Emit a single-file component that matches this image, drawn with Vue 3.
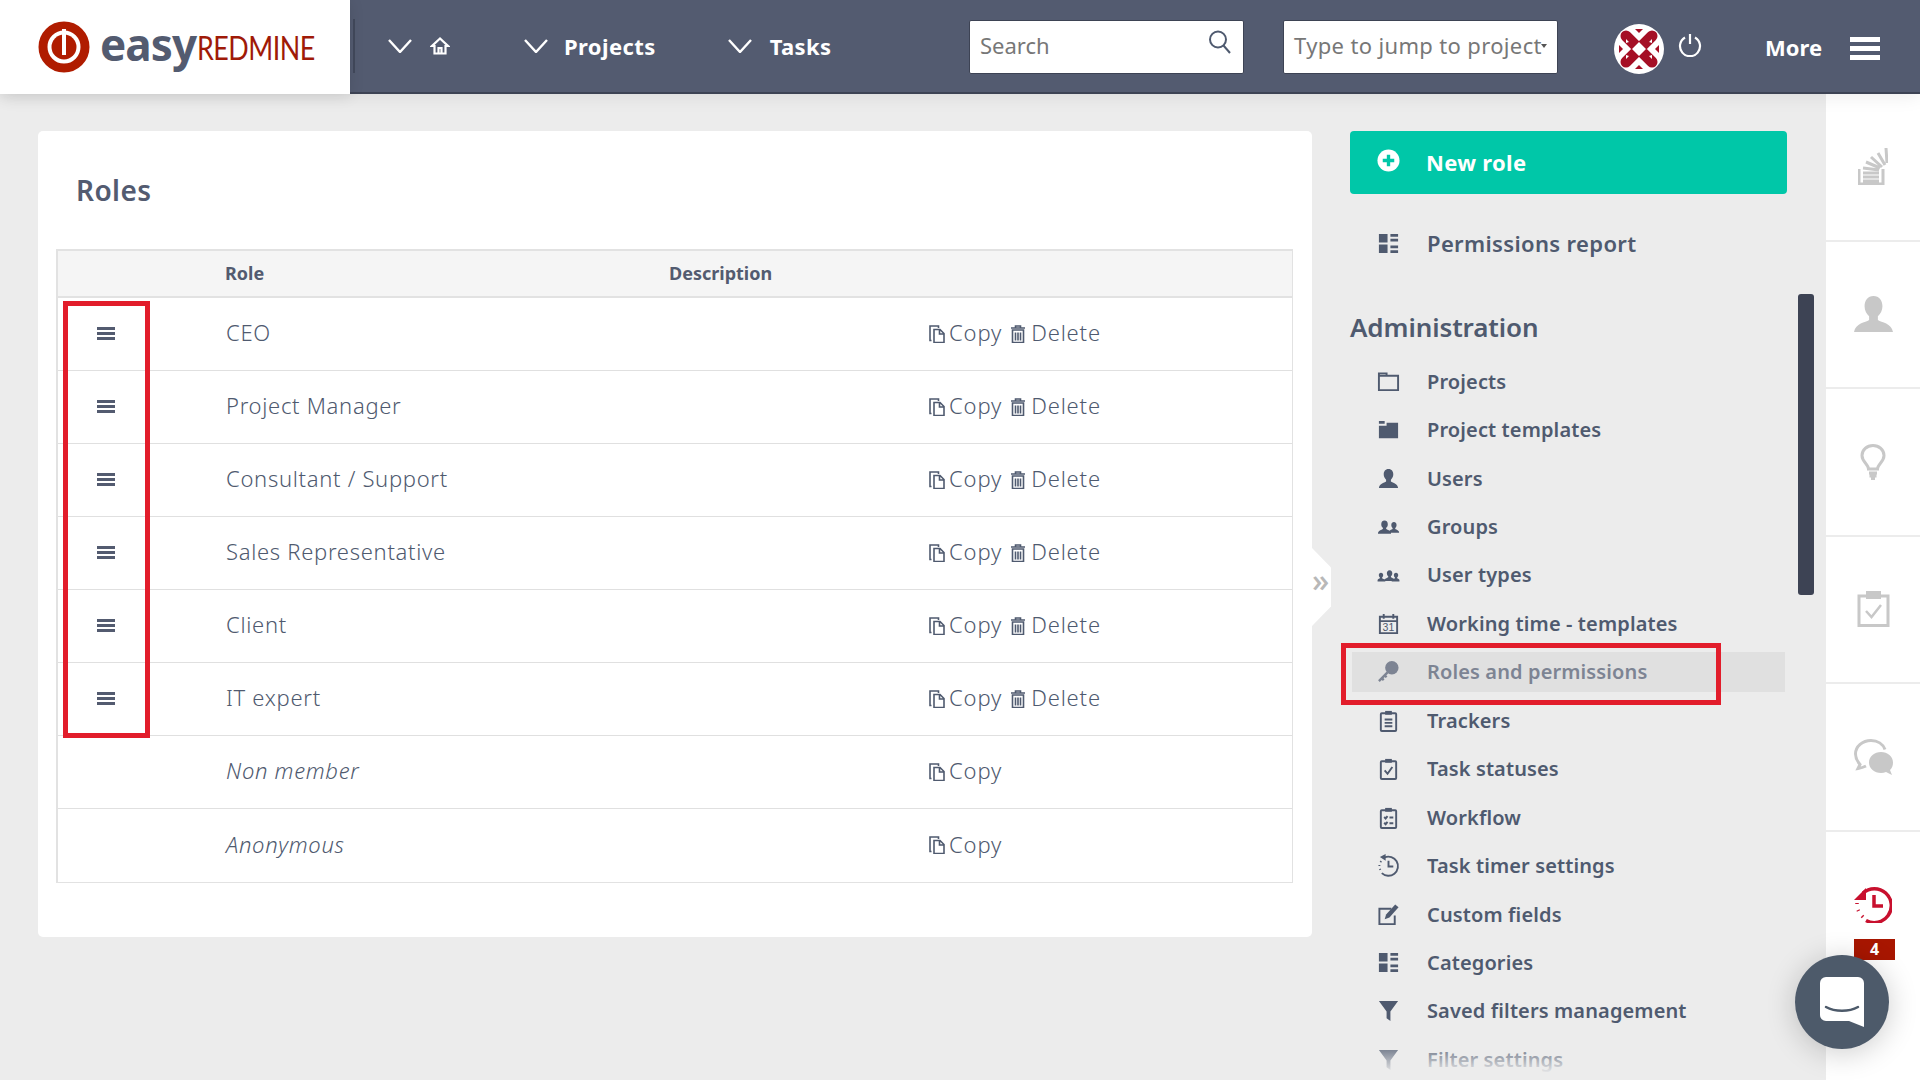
<script setup>
const person = (x, y, s) => {
  const n = (v) => +v.toFixed(2)
  const p = (a, b) => `${n(x + a * s)} ${n(y + b * s)}`
  return `M${p(12, 2)}C${p(8.6, 2)} ${p(7, 4.6)} ${p(7, 7.6)}C${p(7, 10)} ${p(8, 12)} ${p(9.5, 13.2)}V${n(y + 15 * s)}C${p(7.5, 16.6)} ${p(2, 17.2)} ${p(2, 22)}H${n(x + 22 * s)}C${p(22, 17.2)} ${p(16.5, 16.6)} ${p(14.5, 15)}V${n(y + 13.2 * s)}C${p(16, 12)} ${p(17, 10)} ${p(17, 7.6)}C${p(17, 4.6)} ${p(15.4, 2)} ${p(12, 2)}Z`
}

const gridList = 'M2 2h9v9H2zM2 13h9v9H2zM14 2h8v3h-8zM14 7h8v3h-8zM14 14h8v3h-8zM14 19h8v3h-8z'
const clipOutline = 'M5 4.5h14a1 1 0 0 1 1 1V22a1 1 0 0 1-1 1H5a1 1 0 0 1-1-1V5.500a1 1 0 0 1 1-1z'
const clipTop = 'M8.500 2h7v4h-7z'

const menu = [
  { label: 'Projects', stroke: 'M2 6h20v15H2zM2 6V3.500h8V6' },
  { label: 'Project templates', fill: 'M2 3h6v3h-6zM10 5h12v16H2V8h8z' },
  { label: 'Users', fill: person(0, 0, 1) },
  { label: 'Groups', fill: person(-1, 4, 0.72) + person(11, 6, 0.58), small: true },
  { label: 'User types', fill: person(-2, 9, 0.48) + person(6, 6, 0.6) + person(14.500, 9, 0.48), small: true },
  { label: 'Working time - templates', stroke: 'M3 5h18v17H3zM3 9.500h18', fill: 'M6 2h2v5H6zM16 2h2v5h-2z', text: '31' },
  { label: 'Roles and permissions', active: true, fill: 'M15.500 1a7 7 0 1 1 0 14 7 7 0 0 1 0-14z', shaft: 'M11 13l-9 9M5 19l2 2M8 16l2 2' },
  { label: 'Trackers', stroke: clipOutline + 'M8 11h8M8 14.500h8M8 18h8', fill: clipTop },
  { label: 'Task statuses', stroke: clipOutline + 'M8 14l3 3.500 5-7', fill: clipTop },
  { label: 'Workflow', stroke: clipOutline + 'M7.500 11.500l1.500 1.500 2-2.500M7.500 17.500l1.500 1.500 2-2.500M13 12h4M13 18h4', fill: clipTop },
  { label: 'Task timer settings', stroke: 'M8 3.500A10 10 0 1 1 5 20M12 7v6h5', dots: true },
  { label: 'Custom fields', stroke: 'M15 6H2.500v16h16v-9', fill: 'M19 1.500l3.500 3L13 15l-5 2 1.500-5z' },
  { label: 'Categories', fill: gridList },
  { label: 'Saved filters management', fill: 'M2 2h20l-8 11v10l-4-3v-7z' },
  { label: 'Filter settings', fill: 'M2 2h20l-8 11v10l-4-3v-7z' },
]

const roles = [
  { name: 'CEO', drag: true, del: true },
  { name: 'Project Manager', drag: true, del: true },
  { name: 'Consultant / Support', drag: true, del: true },
  { name: 'Sales Representative', drag: true, del: true },
  { name: 'Client', drag: true, del: true },
  { name: 'IT expert', drag: true, del: true },
  { name: 'Non member', builtin: true },
  { name: 'Anonymous', builtin: true },
]
</script>

<template>
  <div class="page">
    <header class="topbar">
      <div class="brand">
        <svg class="brand-mark" viewBox="0 0 52 52">
          <circle cx="26" cy="26" r="21" fill="none" stroke="#b01c00" stroke-width="9" />
          <circle cx="26" cy="26" r="12.500" fill="#b01c00" />
          <rect x="24" y="8" width="4" height="26" fill="#fff" />
        </svg>
        <span class="brand-easy">easy</span>
        <span class="brand-red">REDMINE</span>
      </div>
      <div class="nav-sep"></div>
      <nav class="nav">
        <a class="nav-item nav-home">
          <svg class="chev" viewBox="0 0 24 14"><path d="M1 1l11 12L23 1" /></svg>
          <svg class="home" viewBox="0 0 20 18"><path d="M10 1.500L2 9h2.500v7.500h11V9H18zM8.500 16.500V11h3v5.500" /></svg>
        </a>
        <a class="nav-item nav-projects">
          <svg class="chev" viewBox="0 0 24 14"><path d="M1 1l11 12L23 1" /></svg>
          <span>Projects</span>
        </a>
        <a class="nav-item">
          <svg class="chev" viewBox="0 0 24 14"><path d="M1 1l11 12L23 1" /></svg>
          <span>Tasks</span>
        </a>
      </nav>
      <div class="field field-search">
        <span>Search</span>
        <svg class="search-icon" viewBox="0 0 24 24"><circle cx="10" cy="9.500" r="8" /><path d="M15.500 15.500L22 23" /></svg>
      </div>
      <div class="field field-jump">
        <span class="jump-text">Type to jump to project</span>
        <i class="jump-caret"></i>
      </div>
      <svg class="avatar" viewBox="0 0 50 50">
        <circle cx="25" cy="25" r="25" fill="#fff" />
        <path d="M12 12l26 26M38 12L12 38" stroke="#a50f25" stroke-width="11" stroke-linecap="round" fill="none" />
        <path d="M25 18l7 7-7 7-7-7zM12 15l3 3-3 1zM38 15l-3 3 3 1zM12 35l3-3-3-1zM38 35l-3-3 3-1z" fill="#fff" />
        <path d="M25 9l-4-4h8zM25 41l-4 4h8zM9 25l-4-4v8zM41 25l4-4v8z" fill="#a50f25" />
      </svg>
      <svg class="power" viewBox="0 0 24 24"><path d="M7 4.500a10 10 0 1 0 10 0M12 1v10" /></svg>
      <a class="more">More</a>
      <div class="burger"><i></i><i></i><i></i></div>
    </header>

    <div class="main">
      <section class="content">
        <div class="card">
          <h1>Roles</h1>
          <table class="roles">
            <colgroup>
              <col class="c-drag" /><col class="c-role" /><col class="c-desc" /><col />
            </colgroup>
            <thead>
              <tr><th></th><th>Role</th><th>Description</th><th></th></tr>
            </thead>
            <tbody>
              <tr v-for="r in roles" :key="r.name">
                <td class="drag">
                  <div v-if="r.drag" class="handle"><i></i><i></i><i></i></div>
                </td>
                <td :class="{ builtin: r.builtin }">{{ r.name }}</td>
                <td></td>
                <td>
                  <div class="actions">
                    <svg class="act-icon" viewBox="0 0 16 18"><path d="M5 4.500h6l4 4v9H5zM10.500 4.500v4.500H15M2.500 15.500H1V1h8.500v2" /></svg>
                    <span>Copy</span>
                    <template v-if="r.del">
                      <svg class="act-icon trash" viewBox="0 0 16 18"><path d="M2.500 5h11v12.500h-11zM1 3h14M5.500 3V1h5v2M5.500 7.500v8M8 7.500v8M10.500 7.500v8" /></svg>
                      <span>Delete</span>
                    </template>
                  </div>
                </td>
              </tr>
            </tbody>
          </table>
        </div>
        <div class="collapse-tab"><span>»</span></div>
      </section>

      <aside class="side">
        <a class="btn-new">
          <svg class="btn-plus" viewBox="0 0 24 24">
            <circle cx="12" cy="12" r="11.500" fill="#fff" />
            <path d="M12 6v12M6 12h12" stroke="#00c7a8" stroke-width="3.500" />
          </svg>
          <span>New role</span>
        </a>
        <a class="report">
          <svg class="side-icon" viewBox="0 0 24 24"><path :d="gridList" /></svg>
          <span>Permissions report</span>
        </a>
        <h2>Administration</h2>
        <ul class="menu">
          <li v-for="m in menu" :key="m.label" :class="{ active: m.active }">
            <svg class="side-icon" :class="{ small: m.small }" viewBox="0 0 24 24">
              <path v-if="m.fill" :d="m.fill" />
              <path v-if="m.stroke" class="st" :d="m.stroke" />
              <path v-if="m.shaft" class="shaft" :d="m.shaft" />
              <path v-if="m.dots" class="dots" d="M4.500 7.500l-1 1M2.500 11.500v1M3 15.500l.5 1" />
              <path v-if="m.dots" d="M9 0v7L3 3z" />
              <text v-if="m.text" x="12" y="20" text-anchor="middle">{{ m.text }}</text>
            </svg>
            <span>{{ m.label }}</span>
          </li>
        </ul>
        <div class="side-fade"></div>
        <div class="scroll-thumb"></div>
      </aside>

      <div class="rail">
        <div class="rail-cell">
          <svg class="r-stack" viewBox="0 0 30 37">
            <path class="rs" d="M1 21v15h24V21M5 25h16M5 29h16M5 33h16" />
            <path class="rs" d="M5 20l16 2M8 14l14 6M13 9l11 10M20 5l7 12M28 0l1 15" />
          </svg>
        </div>
        <div class="rail-cell">
          <svg class="r-user" viewBox="0 0 24 21" preserveAspectRatio="none"><path d="M12 0c-3.500 0-5.500 2.700-5.500 6 0 2.500 1.200 4.600 2.800 5.800v2.200C7 15.500 1 15.800 0 21h24c-1-5.200-7-5.500-9.300-7v-2.200c1.600-1.200 2.800-3.300 2.800-5.800 0-3.300-2-6-5.500-6z" /></svg>
        </div>
        <div class="rail-cell">
          <svg class="r-bulb" viewBox="0 0 26 36"><path class="rs" d="M8.500 25c0-5-6.500-7-6.500-13.500a11 10 0 0 1 22 0C24 18 17.500 20 17.500 25zM9 29h8M9.500 32h7M11 35h4" /></svg>
        </div>
        <div class="rail-cell">
          <svg class="r-clip" viewBox="0 0 33 36">
            <path class="rs" d="M9 5H2v29.500h29V5h-7" />
            <path d="M9 0h15v8H9z" fill="#c8c8c8" />
            <path class="rs thin" d="M9 20l5.500 6L24 14" />
          </svg>
        </div>
        <div class="rail-cell">
          <svg class="r-chat" viewBox="0 0 39 36">
            <path class="rs" d="M12 27c-2 1-5 2-8 2.500l2-4C3 22 1.500 18.500 1.500 15 1.500 7.500 8.500 1.500 17 1.500c6.500 0 12 3.500 14 9" />
            <path d="M27 13c6.500 0 12 4.500 12 10.500 0 3-1 5.500-3 7.500l2 5-6-3c-1.500.7-3.200 1-5 1-6.500 0-12-4.500-12-10.500S20.500 13 27 13z" fill="#c8c8c8" />
          </svg>
        </div>
        <div class="rail-cell rail-timer">
          <svg class="r-timer" viewBox="0 0 38 37">
            <path class="rt" d="M9 7a17 17 0 1 1 3 27.500M20 9v11h9" />
            <path d="M12 2v12H0z" fill="#c8102e" />
            <path class="rt dash" d="M3 17v1M4 24l.5 1M8 30l1 1" />
          </svg>
          <div class="badge">4</div>
        </div>
      </div>
    </div>

    <div class="mark mark-handles"></div>
    <div class="mark mark-roles"></div>
    <div class="chat-bubble">
      <svg viewBox="0 0 44 50">
        <path d="M6 0h32a6 6 0 0 1 6 6v44l-15-6H6a6 6 0 0 1-6-6V6a6 6 0 0 1 6-6z" fill="#fff" />
        <path d="M6 30c9 5 23 5 32 0" fill="none" stroke="#4d5a6a" stroke-width="2.500" stroke-linecap="round" />
      </svg>
    </div>
  </div>
</template>

<style>
html, body { margin: 0; background: #ececec; }
</style>

<style scoped>
.page {
  position: relative;
  width: 1920px;
  height: 1080px;
  overflow: hidden;
  display: flex;
  flex-direction: column;
  background: #ececec;
  font-family: "Noto Sans", "Open Sans", sans-serif;
  color: #4f5a6f;
}

.topbar {
  flex: none;
  height: 92px;
  display: flex;
  align-items: center;
  background: #535b70;
  border-bottom: 2px solid #3d4354;
  box-shadow: 0 2px 18px rgba(0, 0, 0, .08);
  position: relative;
  z-index: 2;
}
.brand {
  flex: none;
  width: 350px;
  height: 94px;
  box-sizing: border-box;
  padding: 0 0 0 38px;
  margin-bottom: -2px;
  display: flex;
  align-items: center;
  background: #fff;
  box-shadow: 0 2px 14px rgba(0, 0, 0, .1);
}
.brand-mark { width: 52px; height: 52px; flex: none; }
.brand-easy { margin-left: 10px; font-size: 44px; font-weight: 700; line-height: 52px; letter-spacing: -.9px; color: #535b70; padding-bottom: 6px; }
.brand-red { margin-left: 1px; font-family: Lato, sans-serif; font-weight: 400; font-size: 32px; color: #a01a08; transform: scaleX(.84); transform-origin: left; letter-spacing: -.6px; }
.nav-sep { width: 2px; height: 54px; margin-left: 3px; background: #3f4658; }
.nav { display: flex; align-items: center; margin-left: 33px; color: #fff; font-size: 22px; font-weight: 700; letter-spacing: .4px; }
.nav-item { display: flex; align-items: center; margin-right: 71px; line-height: 30px; }
.nav-home { margin-right: 74px; }
.nav-projects .chev { margin-right: 16px; }
.nav-projects { margin-right: 72px; }
.chev { width: 24px; height: 14px; margin-right: 18px; fill: none; stroke: #fff; stroke-width: 2.4; }
.home { width: 20px; height: 18px; fill: none; stroke: #fff; stroke-width: 2.2; }
.field {
  flex: none;
  box-sizing: border-box;
  width: 275px;
  height: 54px;
  display: flex;
  align-items: center;
  padding: 0 0 4px 10px;
  background: #fff;
  border: 1px solid #3d4354;
  border-radius: 2px;
  font-size: 22px;
  color: #777;
  position: relative;
}
.field-search { position: absolute; left: 969px; top: 20px; }
.field-jump { position: absolute; left: 1283px; top: 20px; letter-spacing: .35px; }
.search-icon { position: absolute; right: 11px; top: 9px; width: 24px; height: 24px; fill: none; stroke: #4f5a6f; stroke-width: 2; }
.jump-text { white-space: nowrap; }
.jump-caret { position: absolute; right: 10px; top: 23px; border: 3px solid transparent; border-top: 4px solid #555; }
.avatar { position: absolute; left: 1614px; top: 24px; width: 50px; height: 50px; }
.power { position: absolute; left: 1678px; top: 33px; width: 24px; height: 24px; fill: none; stroke: #fff; stroke-width: 2.2; }
.more { position: absolute; left: 1765px; top: 30px; color: #fff; font-size: 22px; font-weight: 700; line-height: 34px; }
.burger { position: absolute; left: 1850px; top: 37px; width: 30px; display: flex; flex-direction: column; gap: 4px; }
.burger i { display: block; height: 5px; background: #fff; }

.main { flex: 1; min-height: 0; display: flex; }
.content { flex: none; width: 1312px; box-sizing: border-box; padding: 37px 0 0 38px; position: relative; }
.card {
  width: 1274px;
  height: 806px;
  box-sizing: border-box;
  padding: 0 18px;
  background: #fff;
  border-radius: 5px;
}
h1 { margin: 0; padding: 39px 0 39px 20px; height: 40px; font-size: 28px; line-height: 40px; font-weight: 600; letter-spacing: .4px; color: #535b70; }
.roles {
  width: 1237px;
  table-layout: fixed;
  border-collapse: separate;
  border-spacing: 0;
  border: 2px solid #e2e2e2;
  border-bottom-width: 1px;
  border-right-width: 1px;
}
.c-drag { width: 96px; }
.c-role { width: 507px; }
.c-desc { width: 268px; }
th {
  height: 43px;
  padding: 0 0 2px;
  background: #f5f5f5;
  border-bottom: 2px solid #e2e2e2;
  font-size: 18px;
  font-weight: 700;
  text-align: left;
  color: #535b70;
}
th:nth-child(2) { padding-left: 71px; }
td:nth-child(2) { padding-left: 72px; }
th:nth-child(3) { padding-left: 8px; }
td {
  height: 73px;
  padding: 0 0 4px;
  box-sizing: border-box;
  border-bottom: 1px solid #e0e0e0;
  font-size: 22px;
  font-weight: 300;
  letter-spacing: .7px;
  color: #4f5a6f;
  white-space: nowrap;
}
tbody tr:last-child td { border-bottom: 0; }
.builtin { font-style: italic; }
td.drag { padding-bottom: 0; }
.handle { width: 18px; margin: 0 auto; display: flex; flex-direction: column; gap: 2px; margin-top: -2px; }
.handle i { display: block; height: 3px; background: #535b70; }
.actions { display: flex; align-items: center; letter-spacing: .85px; }
.act-icon { width: 16px; height: 18px; margin-right: 4px; fill: none; stroke: #4f5a6f; stroke-width: 1.6; margin-top: 3px; }
.trash { margin-left: 8px; margin-right: 5px; }

.collapse-tab {
  position: absolute;
  left: 1312px;
  top: 454px;
  width: 19px;
  height: 78px;
  background: #fff;
  clip-path: polygon(0 0, 100% 25%, 100% 75%, 0 100%);
  color: #b8b8b8;
  font-size: 32px;
  font-weight: 500;
  line-height: 64px;
  text-align: left;
  z-index: 1;
}

.side { flex: none; width: 437px; margin-left: 38px; padding-top: 37px; position: relative; overflow: visible; }
.btn-new {
  height: 63px;
  display: flex;
  align-items: center;
  padding: 0 0 2px 27px;
  box-sizing: border-box;
  background: #00c7a8;
  border-radius: 4px;
  color: #fff;
  font-size: 22px;
  font-weight: 700;
  letter-spacing: .3px;
}
.btn-plus { width: 23px; height: 23px; margin-right: 26px; margin-top: -2px; }
.report {
  display: flex;
  align-items: center;
  height: 26px;
  margin-top: 36px;
  padding-left: 27px;
  font-size: 22px;
  font-weight: 600;
  letter-spacing: .35px;
}
.side-icon { flex: none; width: 23px; height: 23px; margin-right: 27px; fill: #4f5a6f; }
.side-icon.small { transform: scale(.95); }
.st { fill: none; stroke: #4f5a6f; stroke-width: 2; }
.dots { fill: none; stroke: #4f5a6f; stroke-width: 2; }
.shaft { fill: none; stroke: #7d8493; stroke-width: 2.5; }
.side-icon text { font-family: "Liberation Sans", sans-serif; font-size: 11px; font-weight: 400; fill: #4f5a6f; }
h2 { margin: 53px 0 0; font-size: 26px; line-height: 36px; font-weight: 600; letter-spacing: -.1px; color: #4f5a6f; }
.menu { list-style: none; margin: 12px 0 0; padding: 0; }
.menu li {
  display: flex;
  align-items: center;
  height: 48.45px;
  margin-left: 2px;
  width: 433px;
  padding-left: 25px;
  box-sizing: border-box;
  font-size: 20px;
  font-weight: 600;
  letter-spacing: .12px;
  white-space: nowrap;
  position: relative;
}
.menu li.active { height: 40px; margin: 4px 0 4.450px 2px; background: #e0e0e0; color: #7d8493; }
.menu li.active .side-icon { fill: #7d8493; }
.side-fade {
  position: absolute;
  left: 0;
  right: 0;
  top: 946px;
  height: 40px;
  background: linear-gradient(rgba(236, 236, 236, 0), #ececec 85%);
}
.scroll-thumb { position: absolute; left: 448px; top: 200px; width: 16px; height: 301px; background: #3d4354; border-radius: 3px; }

.rail { flex: none; width: 94px; margin-left: auto; background: #fff; }
.rail-cell {
  box-sizing: border-box;
  height: 147.500px;
  display: flex;
  flex-direction: column;
  align-items: center;
  justify-content: center;
  border-bottom: 2px solid #ececec;
}
.rail-timer { justify-content: flex-start; padding-top: 54px; border-bottom: 0; }
.rs { fill: none; stroke: #c8c8c8; stroke-width: 3; }
.rs.thin { stroke-width: 2.500; }
.r-stack { width: 30px; height: 37px; }
.r-user { width: 39px; height: 36px; fill: #c8c8c8; }
.r-bulb { width: 26px; height: 36px; }
.r-clip { width: 33px; height: 36px; }
.r-chat { width: 39px; height: 36px; }
.r-timer { width: 38px; height: 37px; }
.rt { fill: none; stroke: #c8102e; stroke-width: 3.500; }
.badge { margin: 16px 0 0 3px; width: 41px; height: 21px; background: #a81600; color: #fff; font-size: 16px; font-weight: 700; line-height: 21px; text-align: center; }

.mark { position: absolute; border: 5px solid #e21d2b; box-sizing: border-box; pointer-events: none; z-index: 3; }
.mark-handles { left: 63px; top: 301px; width: 87px; height: 437px; }
.mark-roles { left: 1341px; top: 643px; width: 380px; height: 62px; }

.chat-bubble {
  position: absolute;
  left: 1795px;
  top: 955px;
  width: 94px;
  height: 94px;
  border-radius: 50%;
  background: #4d5a6a;
  box-shadow: 0 4px 30px rgba(0, 0, 0, .2);
  display: flex;
  align-items: center;
  justify-content: center;
  z-index: 4;
}
.chat-bubble svg { width: 44px; height: 50px; }
</style>
